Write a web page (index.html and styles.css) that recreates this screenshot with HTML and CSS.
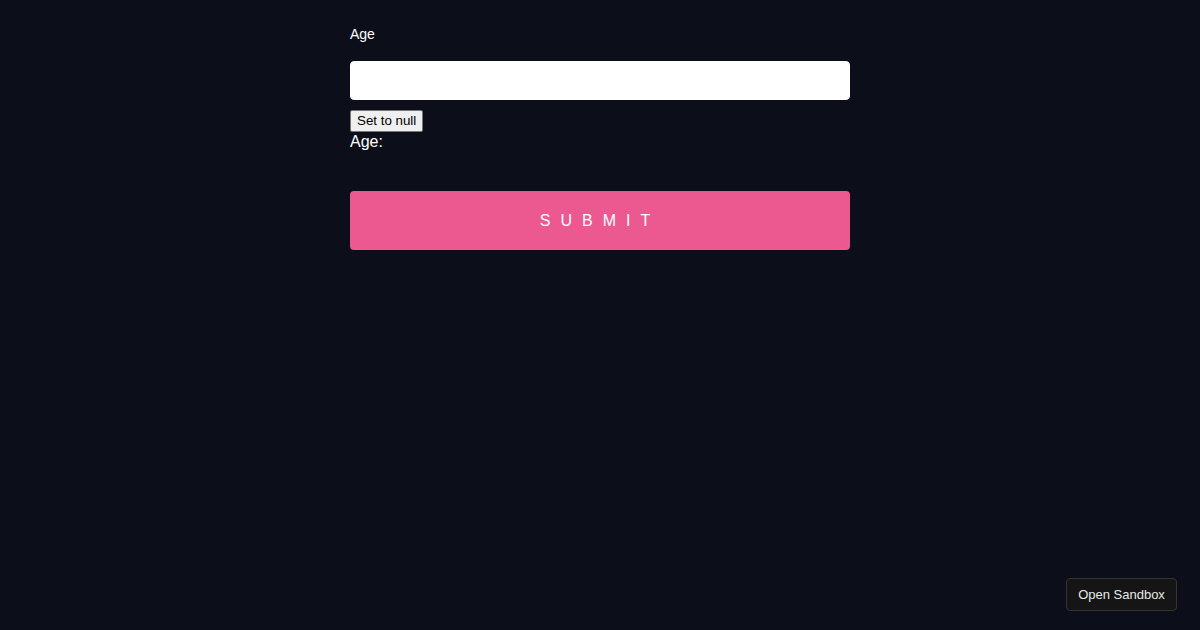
FILE: index.html
```html
<!DOCTYPE html>
<html>
<head>
<meta charset="utf-8">
<link rel="stylesheet" href="styles.css">
</head>
<body>
<form class="form">
  <label class="label">Age</label>
  <input class="text-input" type="text">
  <button type="button" class="null-btn">Set to null</button>
  <div class="value">Age:</div>
  <input class="submit" type="submit" value="Submit">
</form>
<button type="button" class="sandbox">Open Sandbox</button>
</body>
</html>
```
FILE: styles.css
```css
html, body {
  margin: 0;
  padding: 0;
}
body {
  background: #0c0f1a;
  font-family: "Liberation Sans", Arial, sans-serif;
  color: #ffffff;
  height: 630px;
  overflow: hidden;
}
.form {
  max-width: 500px;
  margin: 0 auto;
  display: flex;
  flex-direction: column;
  align-items: flex-start;
}
.label {
  display: block;
  line-height: 2;
  margin-top: 20px;
  margin-bottom: 13px;
  font-size: 14px;
  color: #ffffff;
}
.text-input {
  display: block;
  box-sizing: border-box;
  width: 100%;
  height: 39px;
  border-radius: 4px;
  border: 1px solid #ffffff;
  padding: 10px 15px;
  margin: 0 0 10px 0;
  font-size: 14px;
  font-family: "Liberation Sans", Arial, sans-serif;
  background: #ffffff;
}
.null-btn {
  box-sizing: border-box;
  white-space: nowrap;
  font-family: "Liberation Sans", Arial, sans-serif;
  font-size: 13.333px;
  line-height: 16px;
  background: #efefef;
  color: #000000;
  border: 1px solid #767676;
  border-radius: 2px;
  padding: 2px 6px;
  margin: 0;
  height: 22px;
}
.value {
  font-size: 16px;
  line-height: 19px;
}
.submit {
  box-sizing: border-box;
  width: 100%;
  margin-top: 40px;
  background: #ec5990;
  color: #ffffff;
  text-transform: uppercase;
  border: none;
  border-radius: 4px;
  padding: 20px;
  font-size: 16px;
  line-height: 19px;
  letter-spacing: 10px;
  font-family: "Liberation Sans", Arial, sans-serif;
}
.sandbox {
  position: fixed;
  right: 23px;
  bottom: 19px;
  width: 111px;
  height: 33px;
  background: #151515;
  color: #e8e8e8;
  border: 1px solid #333333;
  border-radius: 4px;
  font-family: "Liberation Sans", Arial, sans-serif;
  font-size: 13px;
  padding: 0;
}
```
